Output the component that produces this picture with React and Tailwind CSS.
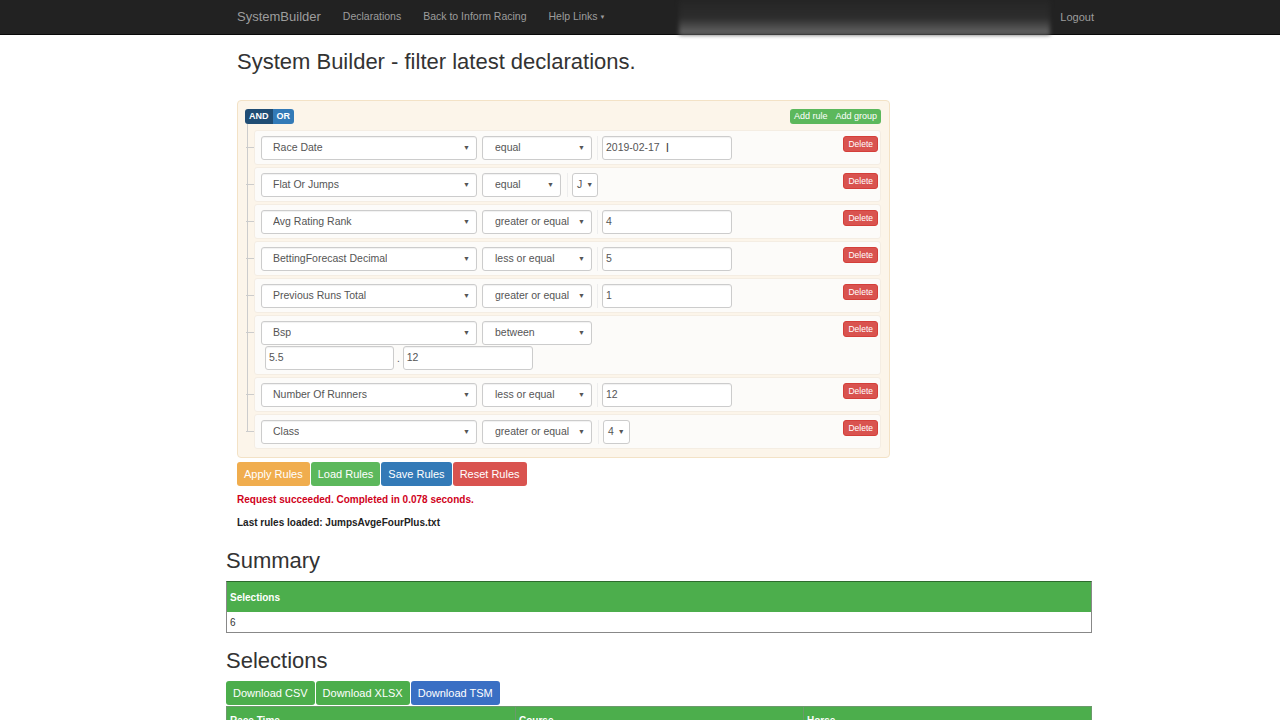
import React from 'react';

const font = { fontFamily: '"Liberation Sans", Arial, sans-serif' };

const Caret = () => <span className="text-[7px] text-[#555]">▼</span>;

const Select = ({ label, width, pl = 'pl-[11px]' }) => (
  <div
    className={`h-[24px] ${width} ${pl} pr-[6px] flex items-center justify-between bg-white border border-[#ccc] rounded-[3px] text-[10.5px] text-[#555] shadow-[inset_0_1px_1px_rgba(0,0,0,0.06)]`}
  >
    <span className="whitespace-nowrap overflow-hidden">{label}</span>
    <Caret />
  </div>
);

const Input = ({ value, width = 'w-[130px]' }) => (
  <div
    className={`h-[24px] ${width} pl-[3px] flex items-center bg-white border border-[#ccc] rounded-[3px] text-[10.5px] text-[#555] shadow-[inset_0_1px_1px_rgba(0,0,0,0.06)]`}
  >
    {value}
  </div>
);

const DeleteBtn = () => (
  <div className="h-[16px] px-[4px] flex items-center rounded-[3px] bg-[#d9534f] border border-[#d43f3a] text-white text-[8.5px]">
    Delete
  </div>
);

const rules = [
  { field: 'Race Date', op: 'equal', value: <span className="flex items-center gap-[6px]">2019-02-17 <span className="text-[#444] text-[12px] font-light">I</span></span> },
  { field: 'Flat Or Jumps', op: 'equal', opWidth: 'w-[79px]', small: 'J' },
  { field: 'Avg Rating Rank', op: 'greater or equal', value: '4' },
  { field: 'BettingForecast Decimal', op: 'less or equal', value: '5' },
  { field: 'Previous Runs Total', op: 'greater or equal', value: '1' },
  { field: 'Bsp', op: 'between', between: ['5.5', '12'] },
  { field: 'Number Of Runners', op: 'less or equal', value: '12' },
  { field: 'Class', op: 'greater or equal', small: '4' },
];

const RuleRow = ({ rule }) => (
  <div className="relative mb-[2px]">
    {/* tree connector */}
    <div className="absolute left-[-4px] top-[17px] w-[8px] h-[1px] bg-[#ccc]" />
    <div className="ml-[4px] bg-[#fcfbf9] border border-[#f4ede3] rounded-[3px] pl-[6px] pr-[2px] pt-[5px] pb-[4px] flex justify-between">
      <div>
        <div className="flex items-center">
          <Select label={rule.field} width="w-[216px]" />
          <div className="ml-[5px]">
            <Select label={rule.op} width={rule.opWidth || 'w-[110px]'} pl="pl-[12px]" />
          </div>
          {rule.value !== undefined && (
            <div className="ml-[5px] pl-[4px] border-l border-[#eee] h-[24px]">
              <Input value={rule.value} />
            </div>
          )}
          {rule.small && (
            <div className="ml-[6px] pl-[4px] border-l border-[#eee]">
              <div className="h-[24px] px-[4px] flex items-center gap-[4px] bg-white border border-[#ccc] rounded-[3px] text-[10.5px] text-[#555]">
                {rule.small} <Caret />
              </div>
            </div>
          )}
        </div>
        {rule.between && (
          <div className="flex items-center mt-[1px] ml-[4px]">
            <Input value={rule.between[0]} width="w-[129px]" />
            <span className="mx-[3px] text-[10px] text-[#555]">.</span>
            <Input value={rule.between[1]} width="w-[130px]" />
          </div>
        )}
      </div>
      <div>
        <DeleteBtn />
      </div>
    </div>
  </div>
);

const Btn = ({ children, color }) => (
  <div className={`h-[24px] px-[7px] flex items-center rounded-[3px] text-white text-[11px] ${color}`}>
    {children}
  </div>
);

export default function App() {
  return (
    <div className="min-h-screen bg-white text-[#333]" style={font}>
      {/* Navbar */}
      <div className="relative h-[35px] bg-[#222] border-b border-[#080808] flex items-center">
        <div className="absolute left-[679px] top-0 w-[371px] h-[35px] bg-gradient-to-b from-[#262626] via-[#2c2c2c] to-[#6a6a6a] blur-[2px]" />
        <div className="ml-[237px] text-[13px] text-[#9d9d9d]">SystemBuilder</div>
        <div className="ml-[22px] flex gap-[22px] text-[10.5px] text-[#9d9d9d]">
          <span>Declarations</span>
          <span>Back to Inform Racing</span>
          <span className="flex items-center gap-[2px]">
            Help Links<span className="text-[6px]">▼</span>
          </span>
        </div>
        <div className="ml-auto mr-[186px] text-[11px] text-[#9d9d9d] relative">Logout</div>
      </div>

      <div className="ml-[226px] w-[866px]">
        <div className="pl-[11px]">
          <h1 className="text-[22px] text-[#333] mt-[14px] leading-[26px]">
            System Builder - filter latest declarations.
          </h1>

          {/* Query builder */}
          <div className="mt-[25px] w-[653px] bg-[#fcf5ea] border border-[#f3e2c6] rounded-[4px] pt-[8px] pl-[7px] pr-[8px] pb-[6px]">
            <div className="flex justify-between items-center">
              <div className="flex rounded-[3px] overflow-hidden text-[9px] font-bold text-white">
                <div className="bg-[#204d74] px-[4px] h-[15px] flex items-center">AND</div>
                <div className="bg-[#337ab7] px-[4px] h-[15px] flex items-center">OR</div>
              </div>
              <div className="flex rounded-[3px] overflow-hidden text-[9px] text-white bg-[#5cb85c] h-[15px] items-center gap-[8px] px-[4px]">
                <span>Add rule</span>
                <span>Add group</span>
              </div>
            </div>
            <div className="relative mt-[6px] ml-[5px]">
              <div className="absolute left-[-3px] top-[-6px] bottom-[18px] w-[1px] bg-[#ccc]" />
              {rules.map((r, i) => (
                <RuleRow key={i} rule={r} />
              ))}
            </div>
          </div>

          {/* Action buttons */}
          <div className="mt-[4px] flex gap-[1px]">
            <Btn color="bg-[#f0ad4e]">Apply Rules</Btn>
            <Btn color="bg-[#5cb85c]">Load Rules</Btn>
            <Btn color="bg-[#337ab7]">Save Rules</Btn>
            <Btn color="bg-[#d9534f]">Reset Rules</Btn>
          </div>
          <div className="mt-[6px] text-[10px] font-bold text-[#d0021b]">
            Request succeeded. Completed in 0.078 seconds.
          </div>
          <div className="mt-[8px] text-[10px] font-bold text-[#222]">
            Last rules loaded: JumpsAvgeFourPlus.txt
          </div>
        </div>

        {/* Summary */}
        <h2 className="mt-[18px] text-[22px] leading-[26px] text-[#333]">Summary</h2>
        <div className="mt-[7px] border border-[#888] border-t-[#2d6a2d]">
          <div className="h-[30px] bg-[#4cae4c] flex items-center pl-[3px] text-[10px] font-bold text-white">
            Selections
          </div>
          <div className="h-[20px] flex items-center pl-[3px] text-[10px] text-[#333]">6</div>
        </div>

        {/* Selections */}
        <h2 className="mt-[15px] text-[22px] leading-[26px] text-[#333]">Selections</h2>
        <div className="mt-[7px] flex gap-[1px]">
          <Btn color="bg-[#4cae4c]">Download CSV</Btn>
          <Btn color="bg-[#4cae4c]">Download XLSX</Btn>
          <Btn color="bg-[#3a6fc4]">Download TSM</Btn>
        </div>
        <div className="mt-[1px] h-[30px] bg-[#4cae4c] border border-[#6b9a6b] grid grid-cols-3 text-[10px] font-bold text-white">
          <div className="pl-[3px] pt-[6px]">Race Time</div>
          <div className="pl-[3px] pt-[6px] border-l border-[#6b9a6b]">Course</div>
          <div className="pl-[3px] pt-[6px] border-l border-[#6b9a6b]">Horse</div>
        </div>
      </div>
    </div>
  );
}
